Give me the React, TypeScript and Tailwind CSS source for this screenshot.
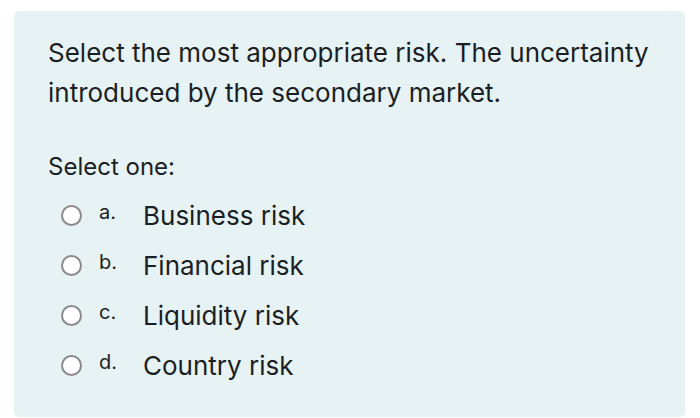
const options = [
  { letter: "a.", label: "Business risk" },
  { letter: "b.", label: "Financial risk" },
  { letter: "c.", label: "Liquidity risk" },
  { letter: "d.", label: "Country risk" },
];

export default function App() {
  return (
    <div className="w-[700px] h-[418px] bg-white pt-[11px] pl-[14px] pr-[15px] font-['Inter',sans-serif] text-[#1b1f23]">
      <div className="h-[406px] rounded-[5px] bg-[#e6f2f4] pl-[34px] pr-[20px] pt-[22px]">
        <p className="text-[26px] leading-[40px]">
          Select the most appropriate risk. The uncertainty introduced by the secondary market.
        </p>
        <p className="mt-[39px] text-[24px] leading-[30px]">Select one:</p>
        <div className="mt-[8px] flex flex-col">
          {options.map((o) => (
            <label key={o.letter} className="flex h-[50px] items-center">
              <span className="ml-[13px] h-[21px] w-[21px] rounded-full border-2 border-[#8a8a8a] bg-white" />
              <span className="ml-[17px] w-[44px] text-[20px] -mt-[6px]">{o.letter}</span>
              <span className="text-[26px]">{o.label}</span>
            </label>
          ))}
        </div>
      </div>
    </div>
  );
}
